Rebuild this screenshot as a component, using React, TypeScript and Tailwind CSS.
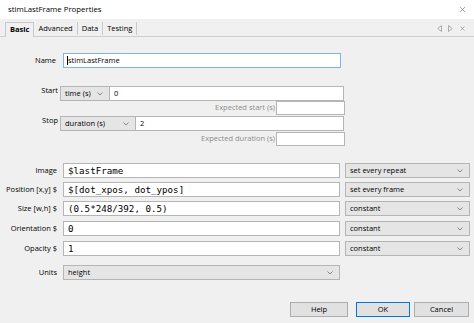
import { X } from 'lucide-react'

function Chevron() {
  return (
    <svg width="6" height="4" viewBox="0 0 6 4" className="shrink-0">
      <path d="M0.5 0.5 L3 3 L5.5 0.5" fill="none" stroke="#7a7a7a" strokeWidth="0.9" />
    </svg>
  )
}

function Select({ value, className }: { value: string; className: string }) {
  return (
    <div
      className={`flex items-center justify-between border border-[#b5b5b5] bg-[#e5e5e5] pl-[4px] pr-[6px] ${className}`}
    >
      <span>{value}</span>
      <Chevron />
    </div>
  )
}

function Field({ value, className, mono }: { value: string; className: string; mono?: boolean }) {
  return (
    <div
      className={`flex items-center border border-[#b5b5b5] bg-white pl-[4px] ${mono ? "font-['DejaVu_Sans_Mono',monospace] text-[9.2px]" : ''} ${className}`}
    >
      {value}
    </div>
  )
}

function ParamRow({ label, value, mode, top }: { label: string; value: string; mode: string; top: string }) {
  return (
    <div className={`flex items-center h-[15px] ${top}`}>
      <div className="w-[57px] text-right whitespace-nowrap">{label}</div>
      <Field value={value} mono className="ml-[6px] w-[277px] h-[15px]" />
      <Select value={mode} className="ml-[5px] w-[125px] h-[15px]" />
    </div>
  )
}

export default function App() {
  return (
    <div className="w-[474px] h-[323px] overflow-hidden bg-[#f0f0f0] text-[7.5px] text-black font-['Open_Sans',sans-serif] flex flex-col">
      {/* title bar */}
      <div className="h-[19px] bg-white flex items-center justify-between pl-[8px] pr-[7px] shrink-0">
        <span className="text-[7.8px]">stimLastFrame Properties</span>
        <X size={9} strokeWidth={1.2} color="#333" />
      </div>

      {/* tabs */}
      <div className="h-[18px] shrink-0 flex items-end border-b border-[#cfcfcf] pl-[5px] pr-[8px]">
        <div className="h-[15px] px-[4px] flex items-center font-bold border border-b-0 border-[#c9c9c9] bg-[#f0f0f0] -mb-px">
          Basic
        </div>
        <div className="h-[13px] px-[4px] flex items-center border-r border-[#c9c9c9] mb-[1px]">Advanced</div>
        <div className="h-[13px] px-[4px] flex items-center border-r border-[#c9c9c9] mb-[1px]">Data</div>
        <div className="h-[13px] px-[4px] flex items-center border-r border-[#c9c9c9] mb-[1px]">Testing</div>
        <div className="ml-auto self-center mt-[2px] flex items-center gap-[6px]">
          <svg width="5" height="7" viewBox="0 0 5 7">
            <path d="M4.5 0.5 L0.8 3.5 L4.5 6.5 Z" fill="none" stroke="#9a9a9a" strokeWidth="0.8" />
          </svg>
          <svg width="5" height="7" viewBox="0 0 5 7">
            <path d="M0.5 0.5 L4.2 3.5 L0.5 6.5 Z" fill="none" stroke="#9a9a9a" strokeWidth="0.8" />
          </svg>
          <X size={7} strokeWidth={1.6} color="#666" />
        </div>
      </div>

      {/* body */}
      <div className="flex flex-col">
        <div className="flex items-center h-[15px] mt-[16px]">
          <div className="w-[56px] text-right">Name</div>
          <div className="ml-[7px] w-[278px] h-[15px] border border-[#7eb4ea] bg-white flex items-center pl-[3px]">
            <span className="w-px h-[9px] bg-black" />
            stimLastFrame
          </div>
        </div>

        {/* start */}
        <div className="flex items-start h-[15px] mt-[18px]">
          <div className="w-[59px] text-right pr-[1px] -mt-[1px]">Start</div>
          <Select value="time (s)" className="ml-[1px] w-[50px] h-[15px]" />
          <Field value="0" className="w-[234px] h-[15px] border-l-0" />
        </div>
        <div className="flex items-center justify-end h-[14px] w-[345px] text-[#8c8c8c]">
          <span className="mr-[1px]">Expected start (s)</span>
          <Field value="" className="w-[69px] h-[14px]" />
        </div>

        {/* stop */}
        <div className="flex items-start h-[15px] mt-[1px]">
          <div className="w-[59px] text-right pr-[1px] -mt-[1px]">Stop</div>
          <Select value="duration (s)" className="ml-[1px] w-[76px] h-[15px]" />
          <Field value="2" className="w-[208px] h-[15px] border-l-0" />
        </div>
        <div className="flex items-center justify-end h-[14px] w-[345px] text-[#8c8c8c] mt-[1px]">
          <span className="mr-[1px]">Expected duration (s)</span>
          <Field value="" className="w-[69px] h-[14px]" />
        </div>

        <ParamRow top="mt-[17px]" label="Image" value="$lastFrame" mode="set every repeat" />
        <ParamRow top="mt-[4px]" label="Position [x,y] $" value="$[dot_xpos, dot_ypos]" mode="set every frame" />
        <ParamRow top="mt-[4px]" label="Size [w,h] $" value="(0.5*248/392, 0.5)" mode="constant" />
        <ParamRow top="mt-[5px]" label="Orientation $" value="0" mode="constant" />
        <ParamRow top="mt-[5px]" label="Opacity $" value="1" mode="constant" />

        <div className="flex items-center h-[15px] mt-[9px]">
          <div className="w-[57px] text-right">Units</div>
          <Select value="height" className="ml-[6px] w-[277px] h-[15px]" />
        </div>

        {/* buttons */}
        <div className="flex items-center h-[15px] mt-[22px]">
          <button className="ml-[290px] w-[58px] h-[15px] bg-[#e1e1e1] border border-[#adadad]">Help</button>
          <button className="ml-[8px] w-[54px] h-[15px] bg-[#e1e1e1] border border-[#0078d7]">OK</button>
          <button className="ml-[4px] w-[55px] h-[15px] bg-[#e1e1e1] border border-[#adadad]">Cancel</button>
        </div>
      </div>
    </div>
  )
}
